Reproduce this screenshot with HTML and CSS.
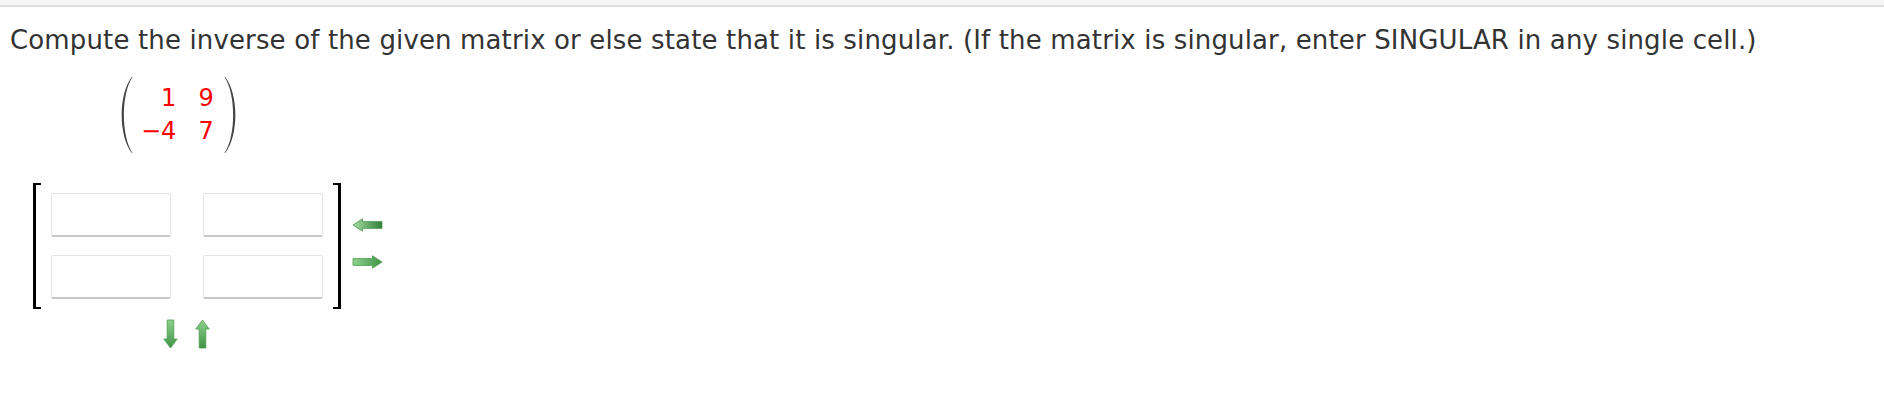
FILE: index.html
```html
<!DOCTYPE html>
<html>
<head>
<meta charset="utf-8">
<link rel="stylesheet" href="styles.css">
</head>
<body>
<div class="topbar"></div>
<p class="question">Compute the inverse of the given matrix or else state that it is singular. (If the matrix is singular, enter SINGULAR in any single cell.)</p>
<div class="given">
  <svg class="paren" width="14" height="78" viewBox="0 0 14 78"><path d="M12.5 1 C1 18 1 60 12.5 77 L12 77.3 C-1.8 60 -1.8 18 12 0.7 Z" fill="#444"/></svg>
  <div class="nums">
    <span>1</span><span>9</span>
    <span>&minus;4</span><span>7</span>
  </div>
  <svg class="paren" width="14" height="78" viewBox="0 0 14 78"><path d="M1.5 1 C13 18 13 60 1.5 77 L2 77.3 C15.8 60 15.8 18 2 0.7 Z" fill="#444"/></svg>
</div>
<div class="answer">
  <div class="bracketed">
    <div class="br br-left"></div>
    <div class="cells">
      <input class="cell" type="text"><input class="cell" type="text">
      <input class="cell" type="text"><input class="cell" type="text">
    </div>
    <div class="br br-right"></div>
    <div class="side">
      <svg width="31" height="14" viewBox="0 0 31 14">
        <defs><linearGradient id="gh" x1="0" y1="0" x2="1" y2="0"><stop offset="0" stop-color="#a6dca6"/><stop offset="1" stop-color="#2f7f34"/></linearGradient></defs>
        <path d="M1 7 L10.5 0.8 L10.5 3.6 L30 3.6 L30 10.4 L10.5 10.4 L10.5 13.2 Z" fill="url(#gh)" stroke="#4a9a4e" stroke-width="0.8"/>
      </svg>
      <svg width="31" height="14" viewBox="0 0 31 14">
        <defs><linearGradient id="gh2" x1="0" y1="0" x2="1" y2="0"><stop offset="0" stop-color="#8fd18f"/><stop offset="1" stop-color="#3f9444"/></linearGradient></defs>
        <path d="M30 7 L20.5 0.8 L20.5 3.6 L1 3.6 L1 10.4 L20.5 10.4 L20.5 13.2 Z" fill="url(#gh2)" stroke="#4a9a4e" stroke-width="0.8"/>
      </svg>
    </div>
  </div>
  <div class="bottom">
    <svg width="15" height="30" viewBox="0 0 15 30">
      <defs><linearGradient id="gv" x1="0" y1="0" x2="0" y2="1"><stop offset="0" stop-color="#8fd18f"/><stop offset="1" stop-color="#3f9444"/></linearGradient></defs>
      <path d="M4.2 1 L10.8 1 L10.8 20 L14.2 20 L7.5 29 L0.8 20 L4.2 20 Z" fill="url(#gv)" stroke="#4a9a4e" stroke-width="0.8"/>
    </svg>
    <svg width="15" height="30" viewBox="0 0 15 30">
      <defs><linearGradient id="gv2" x1="0" y1="0" x2="0" y2="1"><stop offset="0" stop-color="#8fd18f"/><stop offset="1" stop-color="#3f9444"/></linearGradient></defs>
      <path d="M7.5 1 L14.2 10 L10.8 10 L10.8 29 L4.2 29 L4.2 10 L0.8 10 Z" fill="url(#gv2)" stroke="#4a9a4e" stroke-width="0.8"/>
    </svg>
  </div>
</div>
</body>
</html>
```
FILE: styles.css
```css
html, body {
  margin: 0;
  padding: 0;
  background: #fff;
}
body {
  font-family: "DejaVu Sans", Verdana, sans-serif;
  color: #333;
}
.topbar {
  height: 5px;
  background: #f5f5f5;
  border-bottom: 2px solid #e0e0e0;
}
.question {
  margin: 0;
  padding: 18px 0 0 10px;
  font-size: 26px;
  line-height: 30px;
  letter-spacing: 0.14px;
}
.given {
  display: flex;
  align-items: center;
  margin: 21px 0 0 120px;
  height: 78px;
}
.nums {
  display: grid;
  grid-template-columns: auto auto;
  column-gap: 22px;
  justify-items: end;
  color: #ff0000;
  font-size: 24px;
  line-height: 33px;
  padding: 0 9px 0 7px;
}
.answer {
  margin: 29px 0 0 33px;
}
.bracketed {
  display: flex;
  align-items: center;
}
.br {
  width: 5px;
  height: 122px;
  border-top: 2px solid #000;
  border-bottom: 2px solid #000;
}
.br-left {
  border-left: 3px solid #000;
}
.br-right {
  border-right: 3px solid #000;
}
.cells {
  display: grid;
  grid-template-columns: 120px 120px;
  column-gap: 32px;
  row-gap: 18px;
  padding: 0 10px 0 10px;
}
.cell {
  box-sizing: border-box;
  width: 120px;
  height: 44px;
  margin: 0;
  border: 1px solid #e4e4e4;
  border-bottom: 2px solid #c8c8c8;
  border-radius: 2px;
  background: #fff;
  padding: 0 4px;
  font-size: 18px;
}
.side {
  display: flex;
  flex-direction: column;
  gap: 23px;
  margin: 0 0 6px 11px;
}
.side svg, .bottom svg {
  display: block;
}
.bottom {
  display: flex;
  gap: 17px;
  margin: 10px 0 0 130px;
}
```
